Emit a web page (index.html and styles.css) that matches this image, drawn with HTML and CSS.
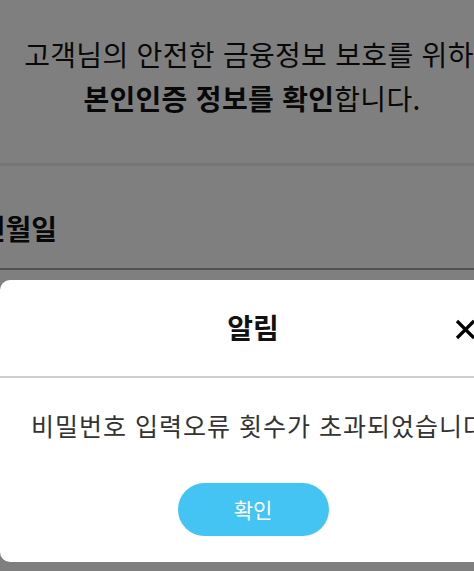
FILE: index.html
```html
<!DOCTYPE html>
<html lang="ko">
<head>
<meta charset="utf-8">
<title>알림</title>
<link rel="stylesheet" href="styles.css">
</head>
<body>
<main class="page">
  <section class="intro">
    <p class="intro-line intro-line-first">고객님의 안전한 금융정보 보호를 위하여</p>
    <p class="intro-line"><strong>본인인증 정보를 확인</strong>합니다.</p>
  </section>
  <section class="field">
    <label class="field-label">생년월일</label>
  </section>
</main>
<div class="overlay">
  <div class="dialog" role="dialog" aria-labelledby="dlg-title">
    <header class="dialog-head">
      <span class="head-spacer"></span>
      <h2 class="dialog-title" id="dlg-title">알림</h2>
      <button class="close" aria-label="닫기">
        <svg width="21" height="21" viewBox="0 0 21 21"><path d="M2 2 L19 19 M19 2 L2 19" stroke="#000" stroke-width="3.2" fill="none"/></svg>
      </button>
    </header>
    <div class="dialog-body">
      <p class="message">비밀번호 입력오류 횟수가 초과되었습니다.</p>
      <button class="confirm">확인</button>
    </div>
  </div>
</div>
</body>
</html>
```
FILE: styles.css
```css
html, body {
  margin: 0;
  padding: 0;
  overflow: hidden;
  background: #fff;
}
body {
  width: 474px;
  height: 571px;
  font-family: "Noto Sans CJK KR", "Noto Sans", sans-serif;
  color: #111;
}
.page {
  width: 524px;
}
.intro {
  padding: 32px 0 43px;
  border-bottom: 3px solid #ececec;
  text-align: center;
}
.intro-line {
  margin: 0;
  font-size: 28px;
  letter-spacing: 0.3px;
  line-height: 44px;
  white-space: nowrap;
}
.intro-line:not(.intro-line-first) {
  padding-right: 20px;
}
.intro-line strong {
  font-weight: 700;
}
.field {
  padding: 40px 0 18px;
  border-bottom: 2px solid #a2a2a2;
}
.field-label {
  display: block;
  font-size: 28px;
  line-height: 44px;
  font-weight: 700;
  text-indent: -46px;
  white-space: nowrap;
}
.overlay {
  position: fixed;
  inset: 0;
  background: rgba(0, 0, 0, 0.5);
  padding-top: 280px;
}
.dialog {
  width: 506px;
  background: #fff;
  border-radius: 10px;
}
.dialog-head {
  height: 96px;
  display: grid;
  grid-template-columns: 1fr auto 1fr;
  align-items: center;
  border-bottom: 2px solid #cfcfcf;
}
.dialog-title {
  margin: 0;
  font-size: 28px;
  font-weight: 700;
  color: #111;
  line-height: 1;
  padding-bottom: 2px;
}
.close {
  justify-self: end;
  margin-right: 30px;
  padding: 0;
  border: 0;
  background: none;
  display: flex;
  margin-top: 3px;
}
.dialog-body {
  padding: 30px 0 26px;
  display: flex;
  flex-direction: column;
  align-items: center;
}
.message {
  margin: 0;
  font-size: 25px;
  letter-spacing: 1px;
  line-height: 34px;
  color: #333;
  white-space: nowrap;
  padding-left: 20px;
}
.confirm {
  margin-top: 41px;
  width: 151px;
  height: 53px;
  border: 0;
  border-radius: 27px;
  background: #43c4f2;
  color: #fff;
  font-family: "Noto Sans CJK KR", "Noto Sans", sans-serif;
  font-size: 21px;
  padding: 0 0 2px;
}
```
